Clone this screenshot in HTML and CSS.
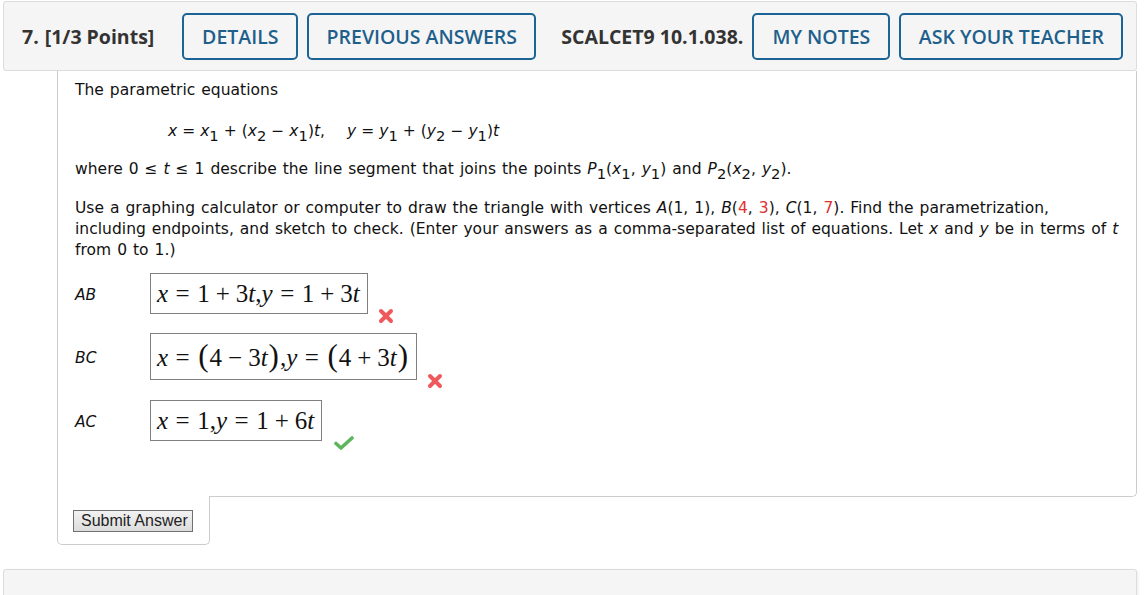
FILE: index.html
```html
<!DOCTYPE html>
<html>
<head>
<meta charset="utf-8">
<link rel="stylesheet" href="styles.css">
</head>
<body>
<div class="page">
  <div class="qhead">
    <span class="qnum">7.</span>
    <span class="qpts">[1/3 Points]</span>
    <button class="hbtn btn-details">DETAILS</button>
    <button class="hbtn btn-prev">PREVIOUS ANSWERS</button>
    <span class="qref">SCALCET9 10.1.038.</span>
    <button class="hbtn btn-notes">MY NOTES</button>
    <button class="hbtn btn-ask">ASK YOUR TEACHER</button>
  </div>
  <div class="qbody">
    <p class="p1">The parametric equations</p>
    <p class="eqn"><i>x</i> = <i>x</i><sub>1</sub> + (<i>x</i><sub>2</sub> − <i>x</i><sub>1</sub>)<i>t</i>,<span class="sp"></span><i>y</i> = <i>y</i><sub>1</sub> + (<i>y</i><sub>2</sub> − <i>y</i><sub>1</sub>)<i>t</i></p>
    <p class="p2">where 0 ≤ <i>t</i> ≤ 1 describe the line segment that joins the points <i>P</i><sub>1</sub>(<i>x</i><sub>1</sub>, <i>y</i><sub>1</sub>) and <i>P</i><sub>2</sub>(<i>x</i><sub>2</sub>, <i>y</i><sub>2</sub>).</p>
    <p class="p3">Use a graphing calculator or computer to draw the triangle with vertices <i>A</i>(1, 1), <i>B</i>(<span class="red">4</span>, <span class="red">3</span>), <i>C</i>(1, <span class="red">7</span>). Find the parametrization,<br>including endpoints, and sketch to check. (Enter your answers as a comma-separated list of equations. Let <i>x</i> and <i>y</i> be in terms of <i>t</i><br>from 0 to 1.)</p>
    <div class="answers">
      <div class="arow r1">
        <span class="alabel">AB</span>
        <span class="abox"><i>x</i><span class="eq">=</span>1<span class="op">+</span>3<i>t</i>,<i>y</i><span class="eq">=</span>1<span class="op">+</span>3<i>t</i></span>
        <svg class="mark cross" width="16" height="16" viewBox="0 0 16 16"><path d="M3 3 L13 13 M13 3 L3 13" stroke="#ee5a5c" stroke-width="4" stroke-linecap="round"/></svg>
      </div>
      <div class="arow r2">
        <span class="alabel">BC</span>
        <span class="abox"><i>x</i><span class="eq">=</span><span class="par">(</span>4<span class="op">−</span>3<i>t</i><span class="par">)</span>,<i>y</i><span class="eq">=</span><span class="par">(</span>4<span class="op">+</span>3<i>t</i><span class="par">)</span></span>
        <svg class="mark cross" width="16" height="16" viewBox="0 0 16 16"><path d="M3 3 L13 13 M13 3 L3 13" stroke="#ee5a5c" stroke-width="4" stroke-linecap="round"/></svg>
      </div>
      <div class="arow r3">
        <span class="alabel">AC</span>
        <span class="abox"><i>x</i><span class="eq">=</span>1,<i>y</i><span class="eq">=</span>1<span class="op">+</span>6<i>t</i></span>
        <svg class="mark check" width="20" height="14" viewBox="0 0 20 14"><path d="M2 7.5 L7 12 L18 2" fill="none" stroke="#5fb55d" stroke-width="3.6" stroke-linecap="round" stroke-linejoin="round"/></svg>
      </div>
    </div>
  </div>
  <div class="qfoot">
    <button class="submit">Submit Answer</button>
  </div>
  <div class="nextq"></div>
</div>
</body>
</html>
```

FILE: styles.css
```css
html, body {
  margin: 0;
  padding: 0;
  background: #fff;
}
body {
  font-family: "DejaVu Sans", Verdana, sans-serif;
  color: #111;
  overflow: hidden;
}
.page {
  padding: 1px 9px 0 3px;
}
.qhead {
  display: flex;
  align-items: center;
  height: 68px;
  background: #f5f5f5;
  border: 1px solid #dcdcdc;
  border-radius: 3px;
  padding: 0 0 0 18px;
  font-family: "Open Sans", sans-serif;
}
.qhead > * {
  flex-shrink: 0;
  white-space: nowrap;
}
.qnum {
  font-weight: 700;
  font-size: 19.5px;
  color: #333;
  margin-right: 6px;
}
.qpts {
  font-weight: 700;
  font-size: 19.5px;
  color: #333;
  margin-right: 28px;
}
.hbtn {
  font-family: "Open Sans", sans-serif;
  font-weight: 600;
  font-size: 19.5px;
  color: #1f5f8b;
  background: transparent;
  border: 2px solid #1d6496;
  border-radius: 5px;
  height: 47px;
  padding: 0;
  margin-right: 9px;
}
.btn-details { width: 116px; }
.btn-prev { width: 229px; }
.btn-notes { width: 138px; }
.btn-ask { width: 224px; }
.qref {
  font-weight: 700;
  font-size: 19.5px;
  color: #333;
  margin: 0 9px 0 16px;
}
.qbody {
  margin-left: 54px;
  border-left: 1px solid #ccc;
  border-right: 1px solid #ccc;
  border-bottom: 1px solid #ccc;
  border-bottom-right-radius: 5px;
  padding: 9px 10px 55px 17px;
  font-size: 15.5px;
  line-height: 21px;
  letter-spacing: 0.03px;
  word-spacing: 1px;
}
.qbody p {
  margin: 0;
}
.eqn {
  margin: 20px 0 0 93px !important;
  word-spacing: 0;
}
.sp { display: inline-block; width: 22px; }
.p2 { margin-top: 17px !important; }
.p3 { margin-top: 18px !important; white-space: nowrap; }
sub {
  font-size: 0.95em;
  vertical-align: -5px;
  line-height: 0;
}
.red { color: #e03131; }
.answers {
  margin-top: 12px;
  letter-spacing: 0;
  word-spacing: 0;
}
.arow {
  display: flex;
  align-items: flex-start;
}
.alabel {
  width: 75px;
  font-style: italic;
  align-self: center;
  padding-top: 4px;
}
.abox {
  font-family: "Liberation Serif", "Times New Roman", serif;
  font-size: 25px;
  line-height: 25px;
  border: 1px solid #808080;
  padding: 7px 7px 7px 6px;
  white-space: nowrap;
}
.eq { margin: 0 0.3em; }
.op { margin: 0 0.24em; }
.par { font-size: 31px; line-height: 25px; margin: 0 1px; }
.r2 { margin-top: 19px; }
.r3 { margin-top: 20px; }
.r2 .abox { padding: 9px 7px 9px 6px; }
.mark { margin-bottom: -30px; }
.r1 .mark { margin-top: 35px; margin-left: 10px; }
.r2 .mark { margin-top: 40px; margin-left: 10px; }
.r3 .mark { margin-top: 36px; margin-left: 12px; }
.qfoot {
  margin-left: 54px;
  margin-top: -1px;
  width: 153px;
  height: 49px;
  background: #fff;
  border: 1px solid #ccc;
  border-top: none;
  border-radius: 0 0 5px 5px;
  padding: 14px 0 0 15px;
  box-sizing: border-box;
  position: relative;
}
.submit {
  font-family: "Liberation Sans", Arial, sans-serif;
  font-size: 16px;
  color: #222;
  padding: 0 7px;
  border: 1px solid #707070;
  background: linear-gradient(#f2f2f2, #dcdcdc);
  border-radius: 0;
  height: 22px;
  width: 120px;
  white-space: nowrap;
}
.nextq {
  margin-top: 24px;
  height: 40px;
  background: #f5f5f5;
  border: 1px solid #dcdcdc;
  border-radius: 3px;
  box-shadow: 1px 1px 3px rgba(0,0,0,0.08);
}
```
